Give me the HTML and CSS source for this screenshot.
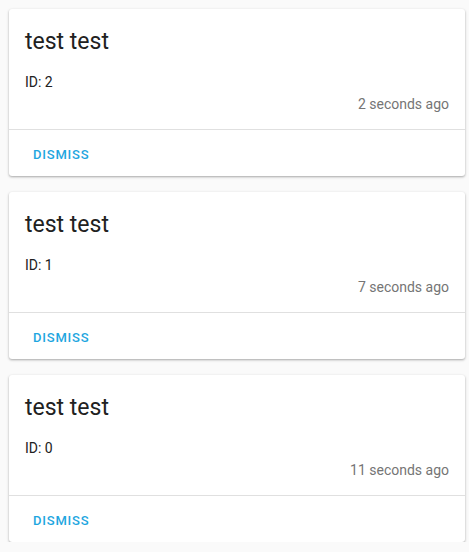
FILE: index.html
```html
<!DOCTYPE html>
<html>
<head>
<meta charset="utf-8">
<link rel="stylesheet" href="styles.css">
</head>
<body>
<div class="list">
  <div class="card">
    <div class="content">
      <div class="title">test test</div>
      <div class="id">ID: 2</div>
      <div class="time">2 seconds ago</div>
    </div>
    <div class="actions"><button class="btn">Dismiss</button></div>
  </div>
  <div class="card">
    <div class="content">
      <div class="title">test test</div>
      <div class="id">ID: 1</div>
      <div class="time">7 seconds ago</div>
    </div>
    <div class="actions"><button class="btn">Dismiss</button></div>
  </div>
  <div class="card">
    <div class="content">
      <div class="title">test test</div>
      <div class="id">ID: 0</div>
      <div class="time">11 seconds ago</div>
    </div>
    <div class="actions"><button class="btn">Dismiss</button></div>
  </div>
</div>
</body>
</html>
```
FILE: styles.css
```css
html, body {
  margin: 0;
  padding: 0;
  background: #fafafa;
  font-family: Roboto, "Liberation Sans", sans-serif;
}
.list {
  display: flex;
  flex-direction: column;
  gap: 16px;
  padding: 9px 4px 0 9px;
}
.card {
  background: #fff;
  border-radius: 3px;
  box-shadow: 0 1px 3px rgba(0,0,0,0.22), 0 1px 2px rgba(0,0,0,0.14);
  height: 167px;
  display: flex;
  flex-direction: column;
}
.content {
  padding: 17px 16px 0 16px;
  height: 103px;
  border-bottom: 1px solid #e0e0e0;
  box-sizing: content-box;
}
.title {
  font-size: 23px;
  line-height: 32px;
  color: #212121;
}
.id {
  margin-top: 14px;
  font-size: 14px;
  line-height: 20px;
  color: #212121;
}
.time {
  margin-top: 2px;
  font-size: 14px;
  line-height: 20px;
  color: #757575;
  text-align: right;
}
.actions {
  flex: 1;
  display: flex;
  align-items: center;
  padding: 2px 16px 0 16px;
}
.btn {
  background: none;
  border: none;
  padding: 0 8px;
  height: 36px;
  font-family: Roboto, "Liberation Sans", sans-serif;
  font-size: 13px;
  font-weight: 500;
  letter-spacing: 0.8px;
  text-transform: uppercase;
  color: #1ea6e0;
}
```
